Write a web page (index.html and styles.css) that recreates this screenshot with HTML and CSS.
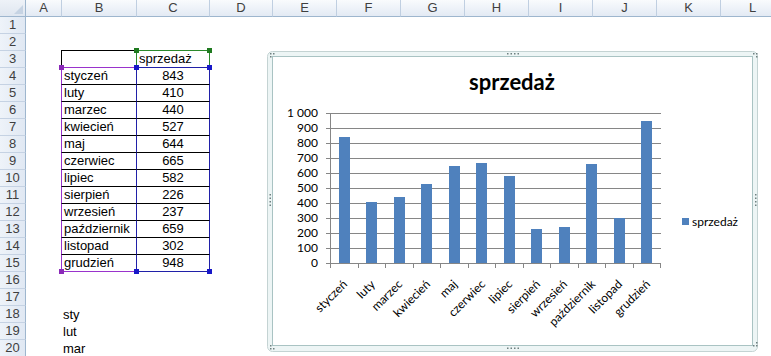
FILE: index.html
```html
<!DOCTYPE html>
<html lang="pl">
<head>
  <meta charset="UTF-8">
  <title>Arkusz - sprzedaż</title>
  <link rel="stylesheet" href="styles.css">
</head>
<body>
  <div class="sheet">
    <!-- nagłówki kolumn -->
    <div class="col-heads">
      <div class="corner"></div>
      <div class="ch w-a">A</div>
      <div class="ch w-b">B</div>
      <div class="ch w-c">C</div>
      <div class="ch w-d">D</div>
      <div class="ch">E</div>
      <div class="ch">F</div>
      <div class="ch">G</div>
      <div class="ch">H</div>
      <div class="ch">I</div>
      <div class="ch">J</div>
      <div class="ch">K</div>
      <div class="ch">L</div>
    </div>

    <div class="grid-body">
      <!-- numery wierszy -->
      <div class="row-heads">
        <div>1</div><div>2</div><div>3</div><div>4</div><div>5</div>
        <div>6</div><div>7</div><div>8</div><div>9</div><div>10</div>
        <div>11</div><div>12</div><div>13</div><div>14</div><div>15</div>
        <div>16</div><div>17</div><div>18</div><div>19</div><div>20</div>
      </div>

      <div class="cells">
        <!-- zakres danych B3:C15 -->
        <div class="range">
          <div class="cell b3"></div><div class="cell c3">sprzedaż</div>
          <div class="cell bn first">styczeń</div><div class="cell cn first">843</div>
          <div class="cell bn">luty</div><div class="cell cn">410</div>
          <div class="cell bn">marzec</div><div class="cell cn">440</div>
          <div class="cell bn">kwiecień</div><div class="cell cn">527</div>
          <div class="cell bn">maj</div><div class="cell cn">644</div>
          <div class="cell bn">czerwiec</div><div class="cell cn">665</div>
          <div class="cell bn">lipiec</div><div class="cell cn">582</div>
          <div class="cell bn">sierpień</div><div class="cell cn">226</div>
          <div class="cell bn">wrzesień</div><div class="cell cn">237</div>
          <div class="cell bn">październik</div><div class="cell cn">659</div>
          <div class="cell bn">listopad</div><div class="cell cn">302</div>
          <div class="cell bn last">grudzień</div><div class="cell cn last">948</div>

          <span class="handle green h1"></span>
          <span class="handle green h2"></span>
          <span class="handle blue h3"></span>
          <span class="handle blue h4"></span>
          <span class="handle blue h5"></span>
          <span class="handle blue h6"></span>
          <span class="handle purple h7"></span>
          <span class="handle purple h8"></span>
        </div>

        <div class="notes">
          <div>sty</div>
          <div>lut</div>
          <div>mar</div>
        </div>

        <!-- wykres -->
        <div class="chart">
          <svg width="491" height="301" viewBox="267 51 491 301">
            <rect x="267.5" y="51.5" width="490" height="300" rx="5" fill="#edf5f5" stroke="#c4d3d3"/>
            <rect x="272.5" y="56.5" width="480" height="289" fill="#fff" stroke="#a9c3c3"/>

            <g class="dots">
              <rect x="507" y="53" width="1.5" height="1.5"/><rect x="510.5" y="53" width="1.5" height="1.5"/>
              <rect x="514" y="53" width="1.5" height="1.5"/><rect x="517.5" y="53" width="1.5" height="1.5"/>
              <rect x="507" y="347.5" width="1.5" height="1.5"/><rect x="510.5" y="347.5" width="1.5" height="1.5"/>
              <rect x="514" y="347.5" width="1.5" height="1.5"/><rect x="517.5" y="347.5" width="1.5" height="1.5"/>
              <rect x="269.5" y="194" width="1.5" height="1.5"/><rect x="269.5" y="197.5" width="1.5" height="1.5"/>
              <rect x="269.5" y="201" width="1.5" height="1.5"/><rect x="269.5" y="204.5" width="1.5" height="1.5"/>
              <rect x="755" y="194" width="1.5" height="1.5"/><rect x="755" y="197.5" width="1.5" height="1.5"/>
              <rect x="755" y="201" width="1.5" height="1.5"/><rect x="755" y="204.5" width="1.5" height="1.5"/>
              <rect x="270" y="53" width="1.5" height="1.5"/><rect x="273" y="53" width="1.5" height="1.5"/>
              <rect x="270" y="56" width="1.5" height="1.5"/>
              <rect x="753" y="53" width="1.5" height="1.5"/><rect x="756" y="53" width="1.5" height="1.5"/>
              <rect x="756" y="56" width="1.5" height="1.5"/>
              <rect x="270" y="345" width="1.5" height="1.5"/><rect x="270" y="348" width="1.5" height="1.5"/>
              <rect x="273" y="348" width="1.5" height="1.5"/>
              <rect x="756" y="342" width="1.5" height="1.5"/><rect x="756" y="345" width="1.5" height="1.5"/>
              <rect x="753" y="345" width="1.5" height="1.5"/>
            </g>

            <text class="title" x="512" y="90">sprzedaż</text>

            <g class="grid">
              <line x1="326" y1="113.5" x2="661" y2="113.5"/>
              <line x1="326" y1="128.5" x2="661" y2="128.5"/>
              <line x1="326" y1="143.5" x2="661" y2="143.5"/>
              <line x1="326" y1="158.5" x2="661" y2="158.5"/>
              <line x1="326" y1="173.5" x2="661" y2="173.5"/>
              <line x1="326" y1="188.5" x2="661" y2="188.5"/>
              <line x1="326" y1="203.5" x2="661" y2="203.5"/>
              <line x1="326" y1="218.5" x2="661" y2="218.5"/>
              <line x1="326" y1="233.5" x2="661" y2="233.5"/>
              <line x1="326" y1="248.5" x2="661" y2="248.5"/>
              <line x1="326" y1="263.5" x2="661" y2="263.5"/>
              <line x1="330.5" y1="113" x2="330.5" y2="264"/>
              <line x1="330.5" y1="263" x2="330.5" y2="268"/>
              <line x1="358.5" y1="263" x2="358.5" y2="268"/>
              <line x1="385.5" y1="263" x2="385.5" y2="268"/>
              <line x1="413.5" y1="263" x2="413.5" y2="268"/>
              <line x1="440.5" y1="263" x2="440.5" y2="268"/>
              <line x1="468.5" y1="263" x2="468.5" y2="268"/>
              <line x1="495.5" y1="263" x2="495.5" y2="268"/>
              <line x1="523.5" y1="263" x2="523.5" y2="268"/>
              <line x1="550.5" y1="263" x2="550.5" y2="268"/>
              <line x1="578.5" y1="263" x2="578.5" y2="268"/>
              <line x1="605.5" y1="263" x2="605.5" y2="268"/>
              <line x1="633.5" y1="263" x2="633.5" y2="268"/>
              <line x1="660.5" y1="263" x2="660.5" y2="268"/>
            </g>

            <g class="ylabels">
              <text x="318" y="117">1 000</text>
              <text x="318" y="132">900</text>
              <text x="318" y="147">800</text>
              <text x="318" y="162">700</text>
              <text x="318" y="177">600</text>
              <text x="318" y="192">500</text>
              <text x="318" y="207">400</text>
              <text x="318" y="222">300</text>
              <text x="318" y="237">200</text>
              <text x="318" y="252">100</text>
              <text x="318" y="267">0</text>
            </g>

            <g class="bars">
              <rect x="339" y="137" width="11" height="126"/>
              <rect x="366" y="202" width="11" height="61"/>
              <rect x="394" y="197" width="11" height="66"/>
              <rect x="421" y="184" width="11" height="79"/>
              <rect x="449" y="166" width="11" height="97"/>
              <rect x="476" y="163" width="11" height="100"/>
              <rect x="504" y="176" width="11" height="87"/>
              <rect x="531" y="229" width="11" height="34"/>
              <rect x="559" y="227" width="11" height="36"/>
              <rect x="586" y="164" width="11" height="99"/>
              <rect x="614" y="218" width="11" height="45"/>
              <rect x="641" y="121" width="11" height="142"/>
            </g>

            <g class="xlabels">
              <text x="348" y="285" transform="rotate(-45 348 285)">styczeń</text>
              <text x="376" y="285" transform="rotate(-45 376 285)">luty</text>
              <text x="403" y="285" transform="rotate(-45 403 285)">marzec</text>
              <text x="431" y="285" transform="rotate(-45 431 285)">kwiecień</text>
              <text x="458" y="285" transform="rotate(-45 458 285)">maj</text>
              <text x="486" y="285" transform="rotate(-45 486 285)">czerwiec</text>
              <text x="513" y="285" transform="rotate(-45 513 285)">lipiec</text>
              <text x="541" y="285" transform="rotate(-45 541 285)">sierpień</text>
              <text x="568" y="285" transform="rotate(-45 568 285)">wrzesień</text>
              <text x="596" y="285" transform="rotate(-45 596 285)">październik</text>
              <text x="623" y="285" transform="rotate(-45 623 285)">listopad</text>
              <text x="651" y="285" transform="rotate(-45 651 285)">grudzień</text>
            </g>

            <rect x="682" y="218" width="7" height="7" fill="#4f81bd"/>
            <text class="legend" x="692" y="226">sprzedaż</text>
          </svg>
        </div>
      </div>
    </div>
  </div>
</body>
</html>
```
FILE: styles.css
```css
/* arkusz w stylu Excela */
body {
  margin: 0;
  background: #fff;
  font-family: "Liberation Sans", Arial, sans-serif;
  font-size: 13px;
  color: #000;
}
.sheet {
  width: 771px;
  height: 356px;
  overflow: hidden;
}
/* nagłówki kolumn */
.col-heads {
  display: flex;
  height: 17px;
  white-space: nowrap;
}
.corner,
.ch {
  flex: none;
  box-sizing: border-box;
  height: 17px;
  border-bottom: 1px solid #9eb6ce;
  border-right: 1px solid #c0cfe1;
  background: linear-gradient(#f9fbfd, #e3eaf4);
}
.corner {
  width: 26px;
  position: relative;
  border-right-color: #9eb6ce;
  background: linear-gradient(#eef2f8, #dfe6f0);
}
.corner::after {
  content: "";
  position: absolute;
  right: 2px;
  bottom: 2px;
  border-left: 9px solid transparent;
  border-bottom: 9px solid #c6d3e3;
}
.ch {
  width: 64px;
  text-align: center;
  line-height: 16px;
  color: #3f3f3f;
}
.ch.w-a { width: 36px; }
.ch.w-b { width: 75px; }
.ch.w-c { width: 73px; }
.ch.w-d { width: 63px; }

/* numery wierszy i komórki */
.grid-body {
  display: flex;
}
.row-heads {
  flex: none;
  width: 26px;
}
.row-heads div {
  box-sizing: border-box;
  height: 17px;
  line-height: 16px;
  text-align: center;
  color: #3f3f3f;
  border-right: 1px solid #9eb6ce;
  border-bottom: 1px solid #c5d2e3;
  background: linear-gradient(to right, #eef3f9, #e0e8f3);
}
.cells {
  flex: 1;
  position: relative;
}

/* zakres danych */
.range {
  position: relative;
  display: grid;
  grid-template-columns: 75px 74px;
  width: 149px;
  margin: 33px 0 0 35px;
}
.cell {
  box-sizing: border-box;
  height: 17px;
  line-height: 16px;
  border-top: 1px solid #000;
  padding-left: 2px;
  white-space: nowrap;
}
.b3 {
  border-left: 1px solid #000;
}
.c3 {
  border: 1px solid #2b8a2b;
  border-bottom: none;
}
.bn {
  border-left: 1px solid #9933cc;
}
.cn {
  border-left: 1px solid #2020a8;
  border-right: 1px solid #2020a8;
  text-align: center;
  padding-left: 0;
}
.bn.first { border-top-color: #9933cc; }
.cn.first { border-top-color: #2020a8; }
.bn.last {
  height: 18px;
  border-bottom: 1px solid #9933cc;
}
.cn.last {
  height: 18px;
  border-bottom: 1px solid #2020a8;
}
/* uchwyty zaznaczenia */
.handle {
  position: absolute;
  width: 5px;
  height: 5px;
}
.handle.green { background: #1f7a1f; }
.handle.blue { background: #1818c8; }
.handle.purple { background: #8a2ab8; }
.h1 { left: 73px; top: -2px; }
.h2 { left: 146px; top: -2px; }
.h3 { left: 73px; top: 15px; }
.h4 { left: 146px; top: 15px; }
.h5 { left: 73px; top: 219px; }
.h6 { left: 146px; top: 219px; }
.h7 { left: -2px; top: 15px; }
.h8 { left: -2px; top: 219px; }

.notes {
  margin: 34px 0 0 37px;
}
.notes div {
  height: 17px;
  line-height: 17px;
}

/* wykres */
.chart {
  position: absolute;
  left: 241px;
  top: 34px;
  width: 491px;
  height: 301px;
}
.chart svg {
  display: block;
}
.chart text {
  font-family: Lato, "Open Sans", sans-serif;
  font-size: 12px;
  fill: #000;
}
.chart .title {
  font-size: 22px;
  font-weight: bold;
  text-anchor: middle;
}
.dots rect { fill: #6f8080; }
.grid line {
  stroke: #868686;
  stroke-width: 1;
}
.ylabels text,
.xlabels text {
  text-anchor: end;
}
.bars rect { fill: #4f81bd; }
```
